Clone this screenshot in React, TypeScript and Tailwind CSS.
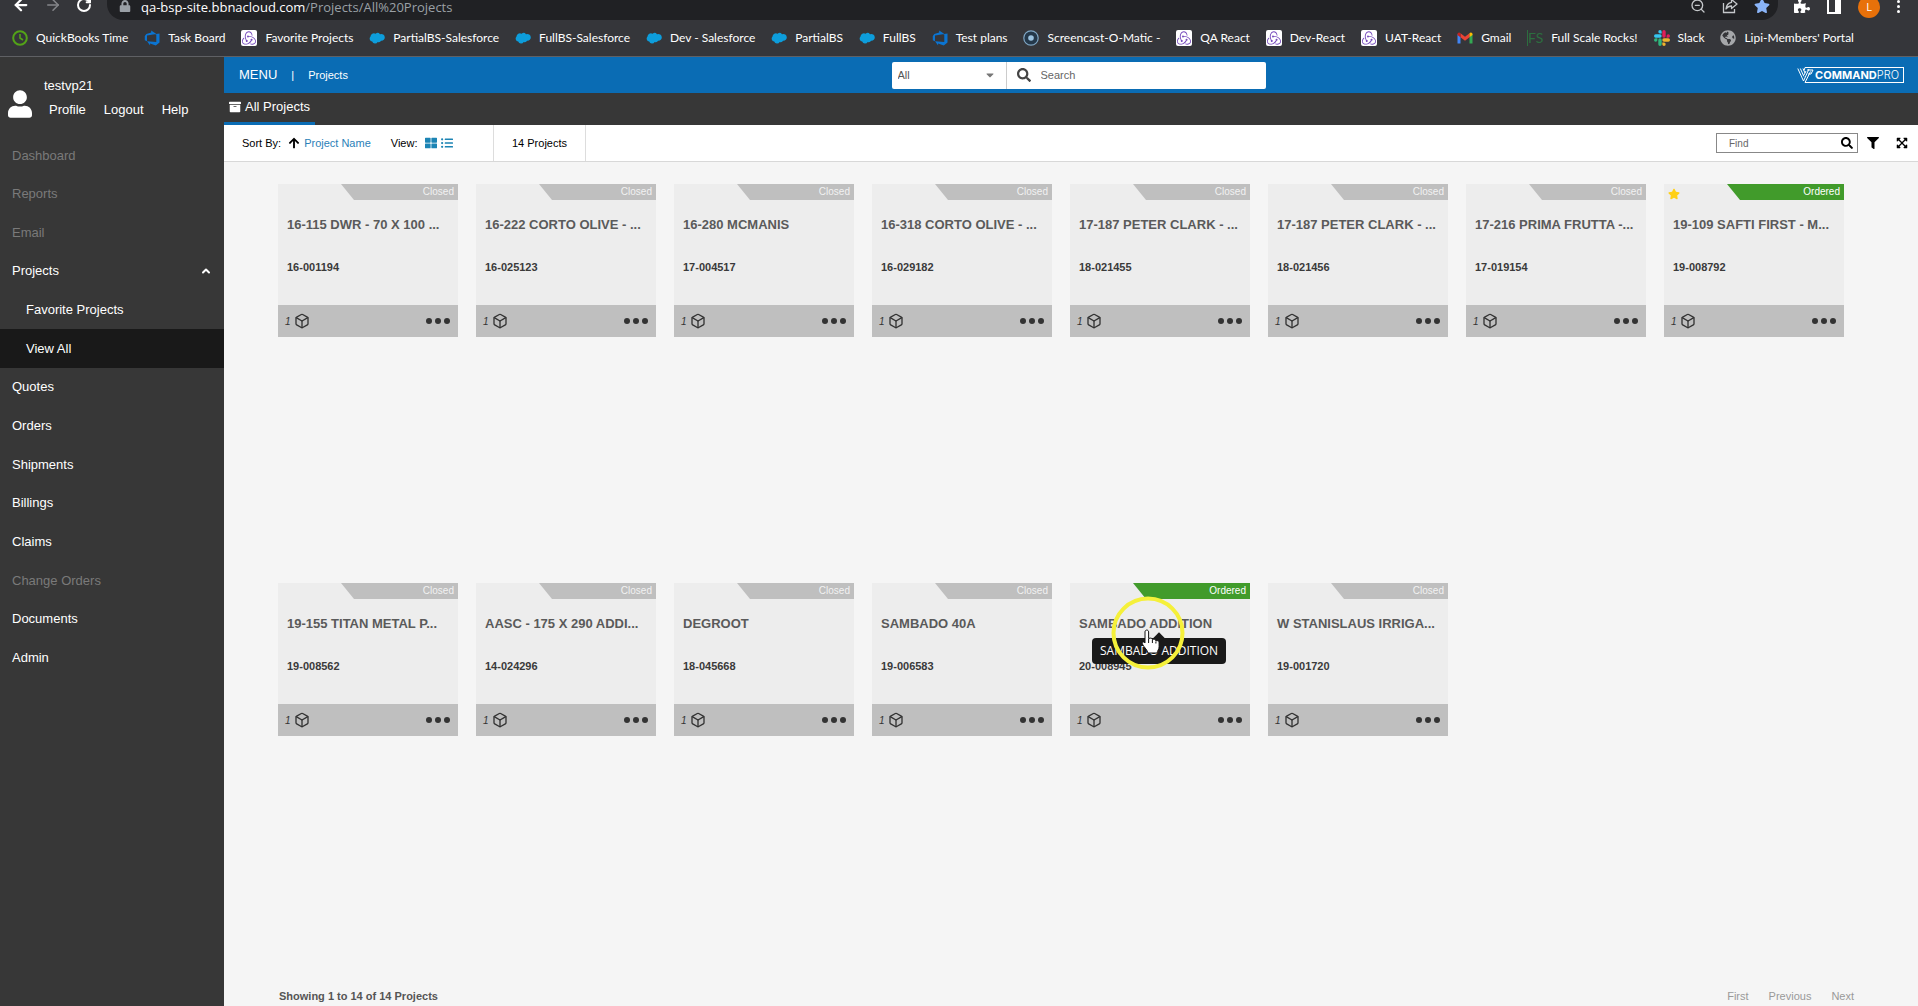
import type { ReactNode } from 'react';
import {
  FaArchive,
  FaArrowUp,
  FaCaretDown,
  FaExpandArrowsAlt,
  FaFilter,
  FaGlobeAmericas,
  FaListUl,
  FaLock,
  FaPuzzlePiece,
  FaSearch,
  FaStar,
  FaThLarge,
  FaUser,
} from 'react-icons/fa';
import { LuArrowLeft, LuArrowRight, LuBox, LuChevronUp, LuRotateCw, LuZoomOut } from 'react-icons/lu';
import { SiRedux } from 'react-icons/si';

interface IBookmark {
  label: string;
  icon: ReactNode;
}

interface INavItem {
  label: string;
  disabled?: boolean;
  child?: boolean;
  active?: boolean;
  expanded?: boolean;
}

interface IProject {
  name: string;
  number: string;
  status: 'Closed' | 'Ordered';
  favorite?: boolean;
  hovered?: boolean;
}

const ClockIcon = () => (
  <svg viewBox="0 0 16 16" className="size-4 shrink-0" fill="none" stroke="#53a318">
    <circle cx="8" cy="8" r="6.8" strokeWidth="2" />
    <path d="M8 4v4l3 2" strokeWidth="1.6" />
  </svg>
);

const DevOpsIcon = () => (
  <svg viewBox="0 0 16 16" className="size-4 shrink-0" fill="#0b74d1">
    <path d="M15.5 3.5v9l-3.7 3-5.7-2v2L3 11.300l9.300.8V4.100zM12.400 4.100 7.200.5v2.100L2.300 4 .8 6v4.200l2.200 1V5.500z" />
  </svg>
);

const CloudIcon = () => (
  <svg viewBox="0 0 16 16" className="size-4 shrink-0" fill="#0d9ddb">
    <path d="M6.600 3.800A3 3 0 0 1 11 4.200a3.500 3.500 0 0 1 4.800 3.300c0 2-1.700 3.500-3.700 3.300a2.700 2.700 0 0 1-3.400 1.100 3 3 0 0 1-5.500-.3A3 3 0 0 1 1.500 6.500a3.300 3.300 0 0 1 5.100-2.700z" />
  </svg>
);

const ReduxIcon = () => (
  <span className="flex size-4 shrink-0 items-center justify-center rounded-xs bg-white">
    <SiRedux className="size-3.5 text-[#764abc]" />
  </span>
);

const RecordIcon = () => (
  <svg viewBox="0 0 16 16" className="size-4 shrink-0">
    <circle cx="8" cy="8" r="7.2" fill="#24384a" stroke="#7fa6c4" strokeWidth="1.2" />
    <circle cx="8" cy="8" r="2.8" fill="#9cc3e0" />
  </svg>
);

const GmailIcon = () => (
  <svg viewBox="0 0 16 16" className="size-4 shrink-0">
    <path d="M.5 4v9.500h3V7z" fill="#4285f4" />
    <path d="M15.500 4v9.500h-3V7z" fill="#34a853" />
    <path d="M3.500 3.200 8 6.700l4.500-3.500v4L8 10.700 3.500 7.200z" fill="#ea4335" />
    <path d="M.5 4.500C.5 2.600 2.300 2 3.500 3.200v4l-3-2.300z" fill="#c5221f" />
    <path d="M15.500 4.500c0-1.900-1.800-2.500-3-1.300v4l3-2.300z" fill="#fbbc04" />
  </svg>
);

const FullScaleIcon = () => (
  <span className="flex size-4 shrink-0 items-center justify-center border-l border-[#2c6e3f] text-sm text-[#2c6e3f]">
    FS
  </span>
);

const SlackIcon = () => (
  <svg viewBox="0 0 16 16" className="size-4 shrink-0">
    <path d="M6 0a1.700 1.700 0 0 0 0 3.400h1.700V1.700A1.700 1.700 0 0 0 6 0zM1.700 4.300a1.700 1.700 0 0 0 0 3.400H6a1.700 1.700 0 0 0 0-3.400z" fill="#36c5f0" />
    <path d="M16 6a1.700 1.700 0 0 0-3.400 0v1.700h1.700A1.700 1.700 0 0 0 16 6zM11.700 1.700a1.700 1.700 0 0 0-3.400 0V6a1.700 1.700 0 0 0 3.400 0z" fill="#e01e5a" />
    <path d="M10 16a1.700 1.700 0 0 0 0-3.400H8.300v1.700A1.700 1.700 0 0 0 10 16zM14.300 11.700a1.700 1.700 0 0 0 0-3.400H10a1.700 1.700 0 0 0 0 3.400z" fill="#ecb22e" />
    <path d="M0 10a1.700 1.700 0 0 0 3.400 0V8.300H1.700A1.700 1.700 0 0 0 0 10zM4.300 14.300a1.700 1.700 0 0 0 3.400 0V10a1.700 1.700 0 0 0-3.400 0z" fill="#2eb67d" />
  </svg>
);

const ShareIcon = () => (
  <svg viewBox="0 0 16 16" className="-mt-0.5 size-4" fill="none" stroke="currentColor" strokeWidth="1.3">
    <path d="M1.500 5v9.500h11V11" />
    <path d="M9.500 1.500 15 6l-5.500 4.500V8C7 8 5.300 9 4 11c.3-3.500 2.200-6 5.500-6.600z" strokeLinejoin="round" />
  </svg>
);

const bookmarks: IBookmark[] = [
  { label: 'QuickBooks Time', icon: <ClockIcon /> },
  { label: 'Task Board', icon: <DevOpsIcon /> },
  { label: 'Favorite Projects', icon: <ReduxIcon /> },
  { label: 'PartialBS-Salesforce', icon: <CloudIcon /> },
  { label: 'FullBS-Salesforce', icon: <CloudIcon /> },
  { label: 'Dev - Salesforce', icon: <CloudIcon /> },
  { label: 'PartialBS', icon: <CloudIcon /> },
  { label: 'FullBS', icon: <CloudIcon /> },
  { label: 'Test plans', icon: <DevOpsIcon /> },
  { label: 'Screencast-O-Matic -', icon: <RecordIcon /> },
  { label: 'QA React', icon: <ReduxIcon /> },
  { label: 'Dev-React', icon: <ReduxIcon /> },
  { label: 'UAT-React', icon: <ReduxIcon /> },
  { label: 'Gmail', icon: <GmailIcon /> },
  { label: 'Full Scale Rocks!', icon: <FullScaleIcon /> },
  { label: 'Slack', icon: <SlackIcon /> },
  { label: "Lipi-Members' Portal", icon: <FaGlobeAmericas className="size-4 shrink-0 text-[#a5a7aa]" /> },
];

const navItems: INavItem[] = [
  { label: 'Dashboard', disabled: true },
  { label: 'Reports', disabled: true },
  { label: 'Email', disabled: true },
  { label: 'Projects', expanded: true },
  { label: 'Favorite Projects', child: true },
  { label: 'View All', child: true, active: true },
  { label: 'Quotes' },
  { label: 'Orders' },
  { label: 'Shipments' },
  { label: 'Billings' },
  { label: 'Claims' },
  { label: 'Change Orders', disabled: true },
  { label: 'Documents' },
  { label: 'Admin' },
];

const projects: IProject[] = [
  { name: '16-115 DWR - 70 X 100 ...', number: '16-001194', status: 'Closed' },
  { name: '16-222 CORTO OLIVE - ...', number: '16-025123', status: 'Closed' },
  { name: '16-280 MCMANIS', number: '17-004517', status: 'Closed' },
  { name: '16-318 CORTO OLIVE - ...', number: '16-029182', status: 'Closed' },
  { name: '17-187 PETER CLARK - ...', number: '18-021455', status: 'Closed' },
  { name: '17-187 PETER CLARK - ...', number: '18-021456', status: 'Closed' },
  { name: '17-216 PRIMA FRUTTA -...', number: '17-019154', status: 'Closed' },
  { name: '19-109 SAFTI FIRST - M...', number: '19-008792', status: 'Ordered', favorite: true },
  { name: '19-155 TITAN METAL P...', number: '19-008562', status: 'Closed' },
  { name: 'AASC - 175 X 290 ADDI...', number: '14-024296', status: 'Closed' },
  { name: 'DEGROOT', number: '18-045668', status: 'Closed' },
  { name: 'SAMBADO 40A', number: '19-006583', status: 'Closed' },
  { name: 'SAMBADO ADDITION', number: '20-008945', status: 'Ordered', hovered: true },
  { name: 'W STANISLAUS IRRIGA...', number: '19-001720', status: 'Closed' },
];

const BrowserBar = () => (
  <header className="bg-[#35363a] text-white">
    <div className="flex h-5 items-start font-['Open_Sans',sans-serif]">
      <div className="flex w-[107px] shrink-0 gap-3.5 pl-3">
        <button aria-label="Back"><LuArrowLeft className="-mt-1 size-[18px]" strokeWidth={3} /></button>
        <button aria-label="Forward"><LuArrowRight className="-mt-1 size-[18px] text-[#85868a]" /></button>
        <button aria-label="Reload"><LuRotateCw className="-mt-1 size-4" strokeWidth={3} /></button>
      </div>
      <div className="flex h-5 flex-1 items-start rounded-b-2xl bg-[#202124] pr-2 pl-3">
        <FaLock className="mr-2.5 size-3 text-[#9aa0a6]" />
        <p className="flex-1 text-[13px] leading-[14px]">
          qa-bsp-site.bbnacloud.com<span className="text-[#9aa0a6]">/Projects/All%20Projects</span>
        </p>
        <div className="flex gap-4 text-[#c4c7ca]">
          <LuZoomOut className="-mt-0.5 size-4" />
          <ShareIcon />
          <FaStar className="-mt-0.5 size-4 text-[#8ab4f8]" />
        </div>
      </div>
      <div className="flex w-[140px] shrink-0 items-start justify-between pr-[18px] pl-4">
        <FaPuzzlePiece className="-mt-0.5 size-4" />
        <span className="-mt-0.5 h-4 w-3.5 border-2 border-r-[6px] border-white" />
        <span className="-mt-1 flex size-[22px] items-center justify-center rounded-full bg-[#e8710a] text-[11px]">L</span>
        <span className="flex flex-col gap-0.5">
          <span className="size-[3px] rounded-full bg-white" />
          <span className="size-[3px] rounded-full bg-white" />
          <span className="size-[3px] rounded-full bg-white" />
        </span>
      </div>
    </div>
    <nav className="flex h-[37px] justify-between border-b border-[#5f6064] pr-16 pl-3 font-[Lato,sans-serif]">
      {bookmarks.map((bookmark) => (
        <a key={bookmark.label} href="#" className="flex items-center gap-2 text-xs whitespace-nowrap">
          {bookmark.icon}
          {bookmark.label}
        </a>
      ))}
    </nav>
  </header>
);

const Sidebar = () => (
  <aside className="w-56 shrink-0 bg-[#373737] text-[13px] text-white">
    <div className="flex h-[79px] items-end gap-3 pb-3.5 pl-2">
      <FaUser className="mb-1 h-7 w-6" />
      <div className="leading-6">
        <p>testvp21</p>
        <div className="flex gap-[18px] pl-[5px]">
          <a href="#">Profile</a>
          <a href="#">Logout</a>
          <a href="#">Help</a>
        </div>
      </div>
    </div>
    <nav className="flex h-[541px] flex-col">
      {navItems.map((item) => (
        <a
          key={item.label}
          href="#"
          className={`flex flex-1 items-center justify-between pr-3 ${item.child ? 'pl-[26px]' : 'pl-3'} ${
            item.active ? 'bg-[#191919]' : ''
          } ${item.disabled ? 'text-[#7a7a7a]' : ''}`}
        >
          {item.label}
          {item.expanded && <LuChevronUp className="size-3" strokeWidth={4} />}
        </a>
      ))}
    </nav>
  </aside>
);

const Logo = () => (
  <a href="#" aria-label="CommandPro" className="flex items-center justify-self-end text-white">
    <svg viewBox="0 0 18 16" className="h-4 w-[18px]" fill="none" stroke="currentColor">
      <path d="M.8 1.500 6.500 14 12 2M3.300 1.500l3.600 8M6 1.500l2 4.500M9 4l-2 4M18 .5H8l-1 3M8 15.500 13.500 4.500M8 15.500H18M11 7h3l2-4h-6" />
    </svg>
    <span className="flex h-4 items-center border border-l-0 border-white pr-1 font-[Inter,sans-serif] text-[11px] font-bold">
      COMMAND<span className="font-light">PRO</span>
    </span>
  </a>
);

const TopBar = () => (
  <div className="grid h-9 grid-cols-[1fr_auto_1fr] items-center bg-[#0a6cb4] pr-3.5 pl-[15px] text-[11px]">
    <div className="flex items-center gap-3.5 text-white">
      <button className="text-[13px]">MENU</button>
      <span>|</span>
      <a href="#">Projects</a>
    </div>
    <form className="ml-3.5 flex h-[27px] w-[374px] items-center rounded-xs bg-white text-[#555]">
      <div className="flex h-full w-[115px] items-center border-r border-[#ccc] pr-2.5 pl-1.5">
        <select aria-label="Search in" className="flex-1 appearance-none">
          <option>All</option>
        </select>
        <FaCaretDown className="size-3 text-[#777]" />
      </div>
      <FaSearch className="mx-2.5 size-3.5 text-[#444]" />
      <input type="text" aria-label="Search" placeholder="Search" className="flex-1 outline-none placeholder:text-[#666]" />
    </form>
    <Logo />
  </div>
);

const Toolbar = () => (
  <div className="flex h-[37px] items-center border-b border-[#d8d8d8] bg-white pr-2.5 text-[11px] text-black">
    <div className="flex h-full w-[270px] items-center border-r border-[#ddd] pl-[18px]">
      <span className="mr-[7px]">Sort By:</span>
      <button className="mr-5 flex items-center gap-1 text-[#2b7fb8]">
        <FaArrowUp className="size-3 text-black" />
        Project Name
      </button>
      <span className="mr-2">View:</span>
      <button aria-label="Grid view" className="mr-1 text-[#1c84b4]"><FaThLarge className="size-3" /></button>
      <button aria-label="List view" className="text-[#1c84b4]"><FaListUl className="size-3" /></button>
    </div>
    <p className="flex h-full w-[92px] items-center justify-center border-r border-[#ddd]">14 Projects</p>
    <div className="ml-auto flex items-center">
      <form className="flex h-5 w-[142px] items-center border border-[#888] pr-1 pl-3">
        <input type="text" aria-label="Find" placeholder="Find" className="min-w-0 flex-1 text-[10px] outline-none placeholder:text-[#666]" />
        <button aria-label="Find projects"><FaSearch className="size-3" /></button>
      </form>
      <button aria-label="Filter" className="mr-[17px] ml-[9px]"><FaFilter className="size-3" /></button>
      <button aria-label="Expand"><FaExpandArrowsAlt className="size-3" /></button>
    </div>
  </div>
);

const Pointer = () => (
  <svg viewBox="0 0 74 74" className="absolute top-[13px] left-[41px] z-10 size-[74px]" aria-hidden="true">
    <circle cx="37" cy="37" r="34.5" fill="none" stroke="#f5f03a" strokeWidth="4" />
    <path
      d="M34 36c0-2.600 3.600-2.600 3.600 0v6.500c2.400-1 3.600 0 3.800 1 2-.8 3.300 0 3.500 1.300 2-.6 3.200.3 3.200 2v4c0 3-1.900 3.700-1.900 6.200H37c-1-4-4.500-6-5.700-9.200-.6-2 1.200-2.600 2.700-.8z"
      fill="#fff"
      stroke="#111"
      strokeWidth="1"
    />
    <path d="M37.600 43v4M41.400 44v3M44.900 45.500v2" stroke="#111" strokeWidth="1" />
  </svg>
);

const ProjectCard = ({ project }: { project: IProject }) => {
  const ordered = project.status === 'Ordered';

  return (
    <article className="relative flex h-[153px] flex-col bg-[#ededed]">
      <div className="flex h-4 items-start justify-between">
        <span>{project.favorite && <FaStar className="mt-1 ml-1 size-3 text-[#ffd015]" />}</span>
        <span
          className={`h-4 w-[117px] pr-1 text-right text-[10px] leading-4 [clip-path:polygon(0_0,100%_0,100%_100%,13px_100%)] ${
            ordered ? 'bg-[#419b2b] text-white' : 'bg-[#bfbfbf] text-[#f2f2f2]'
          }`}
        >
          {project.status}
        </span>
      </div>
      <div className="flex-1 pt-[17px] pl-[9px]">
        <h2 className="text-[13px] leading-4 font-bold whitespace-nowrap text-[#5a5a5a]">{project.name}</h2>
        <p className="pt-[26px] text-[11px] leading-4 font-bold text-[#3a3a3a]">{project.number}</p>
      </div>
      <div className="flex h-8 items-center justify-between bg-[#bfbfbf] pr-2 pl-[7px] text-[#333]">
        <span className="flex items-center gap-[3px] text-[10px] italic">
          1 <LuBox className="size-4" strokeWidth={2} />
        </span>
        <button aria-label={`Actions for ${project.name}`} className="flex gap-[3px]">
          <span className="size-1.5 rounded-full bg-[#333]" />
          <span className="size-1.5 rounded-full bg-[#333]" />
          <span className="size-1.5 rounded-full bg-[#333]" />
        </button>
      </div>
      {project.hovered && (
        <>
          <div
            role="tooltip"
            className="absolute top-[55px] left-[22px] rounded-sm bg-[#1a1a1a] px-2 py-1 font-['Open_Sans',sans-serif] text-xs leading-[18px] whitespace-nowrap text-white"
          >
            <span className="absolute -top-1 left-1/2 size-2 -translate-x-1/2 rotate-45 bg-[#1a1a1a]" />
            {project.name}
          </div>
          <Pointer />
        </>
      )}
    </article>
  );
};

const App = () => {
  return (
    <div className="flex min-h-screen flex-col font-['Liberation_Sans',Arial,sans-serif]">
      <BrowserBar />
      <div className="flex flex-1">
        <Sidebar />
        <main className="flex min-w-0 flex-1 flex-col bg-[#f5f5f5]">
          <TopBar />
          <div className="h-8 bg-[#373737] text-[13px] text-white">
            <a href="#" className="inline-flex h-8 items-center gap-1 border-b-[3px] border-[#0a6cb4] px-[5px] pb-0.5">
              <FaArchive className="size-3" />
              All Projects
            </a>
          </div>
          <Toolbar />
          <section className="grid grid-cols-[repeat(auto-fill,180px)] gap-x-[18px] gap-y-[246px] pt-[22px] pr-5 pl-[54px]">
            {projects.map((project) => (
              <ProjectCard key={project.number} project={project} />
            ))}
          </section>
          <footer className="mt-auto flex items-center justify-between pr-16 pb-0.5 pl-[55px] text-[11px] leading-4">
            <p className="font-bold text-[#555]">Showing 1 to 14 of 14 Projects</p>
            <div className="flex gap-5 text-[#999]">
              <button>First</button>
              <button>Previous</button>
              <button>Next</button>
            </div>
          </footer>
        </main>
      </div>
    </div>
  );
};

export default App;
